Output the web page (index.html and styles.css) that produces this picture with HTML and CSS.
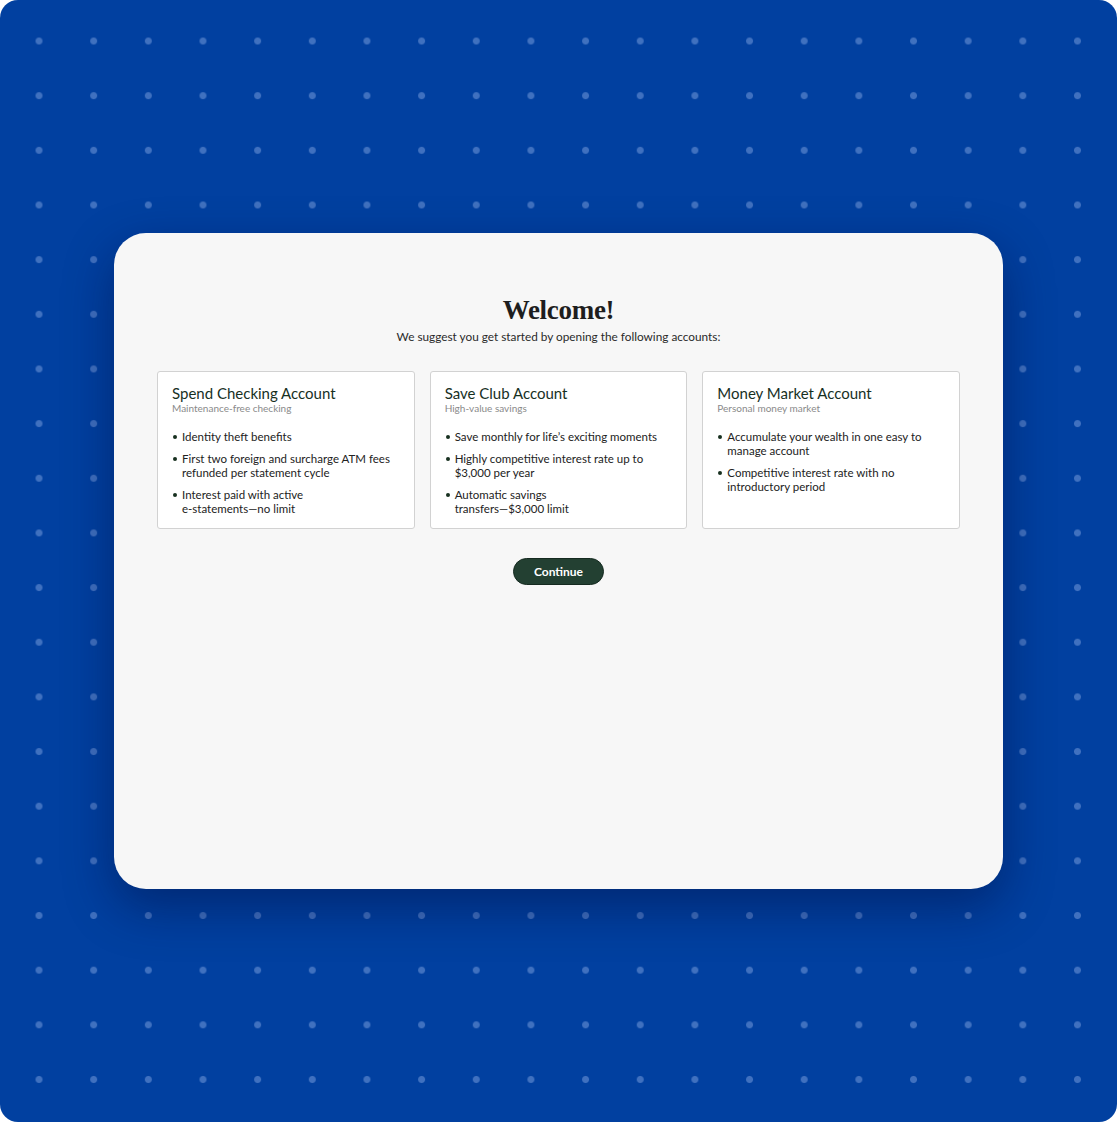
FILE: index.html
```html
<!DOCTYPE html>
<html>
	<head>
		<meta charset="UTF-8">
		<title>Welcome</title>
		<link rel="stylesheet" href="styles.css">
	</head>
	<body>
		<div class="frame">
			<div class="modal">
				<h1 class="title">Welcome!</h1>
				<p class="lead">We suggest you get started by opening the following accounts:</p>
				<div class="cards">
					<div class="card">
						<h2>Spend Checking Account</h2>
						<p class="sub">Maintenance-free checking</p>
						<ul>
							<li>Identity theft benefits</li>
							<li>First two foreign and surcharge ATM fees refunded per statement cycle</li>
							<li>Interest paid with active<br>e-statements—no limit</li>
						</ul>
					</div>
					<div class="card">
						<h2>Save Club Account</h2>
						<p class="sub">High-value savings</p>
						<ul>
							<li>Save monthly for life’s exciting moments</li>
							<li>Highly competitive interest rate up to $3,000 per year</li>
							<li>Automatic savings<br>transfers—$3,000 limit</li>
						</ul>
					</div>
					<div class="card">
						<h2>Money Market Account</h2>
						<p class="sub">Personal money market</p>
						<ul>
							<li>Accumulate your wealth in one easy to manage account</li>
							<li>Competitive interest rate with no introductory period</li>
						</ul>
					</div>
				</div>
				<button class="btn">Continue</button>
			</div>
		</div>
	</body>
</html>
```
FILE: styles.css
```css
html, body {
	margin: 0;
	padding: 0;
	background: #fff;
}
ul, li, h1, h2, p {
	margin: 0;
	padding: 0;
	list-style: none;
}
.frame {
	width: 1117px;
	height: 1122px;
	box-sizing: border-box;
	padding: 233px 114px 0;
	border-radius: 18px;
	background-color: #0140a0;
	background-image: radial-gradient(circle, rgba(150, 180, 235, .42) 3px, transparent 4px);
	background-size: 54.67px 54.67px;
	background-position: 11.7px 13.7px;
	font-family: "Lato", "Open Sans", sans-serif;
	color: #222;
}
.modal {
	height: 656px;
	box-sizing: border-box;
	padding: 62px 43px 0 43px;
	border-radius: 32px;
	background: #f7f7f7;
	box-shadow: 0 18px 50px rgba(0, 10, 60, .45);
	display: flex;
	flex-direction: column;
	align-items: center;
}
.title {
	font-family: "Liberation Serif", serif;
	font-size: 27px;
	font-weight: bold;
	line-height: 30px;
	color: #1e1e1e;
	letter-spacing: -0.3px;
}
.lead {
	margin-top: 4px;
	font-size: 11.8px;
	line-height: 16px;
	color: #2a2a2a;
}
.cards {
	margin-top: 26px;
	width: 100%;
	display: grid;
	grid-template-columns: repeat(3, 1fr);
	gap: 15px;
}
.card {
	background: #fff;
	border: 1px solid #d2d2d2;
	border-radius: 3px;
	padding: 11px 14px 14px;
	height: 158px;
	box-sizing: border-box;
}
.card h2 {
	font-size: 15px;
	font-weight: normal;
	line-height: 20px;
	color: #17301f;
}
.card .sub {
	font-size: 10px;
	line-height: 11px;
	color: #8a8a8a;
}
.card ul {
	margin-top: 16px;
}
.card li {
	position: relative;
	padding-left: 10px;
	font-size: 11.5px;
	line-height: 14px;
	color: #222;
	margin-bottom: 8px;
}
.card li:before {
	content: "";
	position: absolute;
	left: 1px;
	top: 5px;
	width: 4px;
	height: 4px;
	border-radius: 50%;
	background: #17301f;
}
.btn {
	margin-top: 29px;
	width: 91px;
	height: 27px;
	border: 1px solid #152a20;
	border-radius: 14px;
	background: #234032;
	color: #fff;
	font-family: "Lato", sans-serif;
	font-weight: bold;
	font-size: 12px;
	cursor: pointer;
}
```
